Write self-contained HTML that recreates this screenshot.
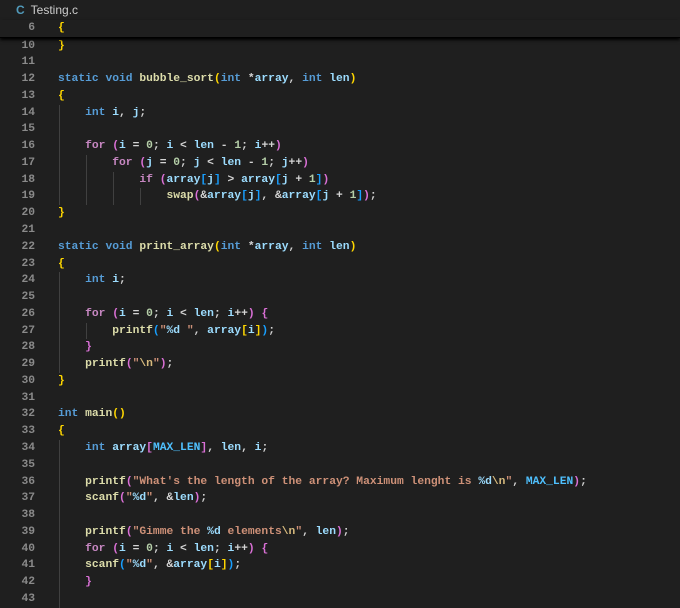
<!DOCTYPE html>
<html><head><meta charset="utf-8"><style>
body{margin:0;width:680px;height:605px;background:#1f1f1f;overflow:hidden;font-family:"Liberation Mono",monospace;font-size:11.3px;font-weight:bold;color:#d4d4d4;position:relative}
.tab{position:absolute;left:16px;top:3px;font-family:"Liberation Sans",sans-serif;font-weight:normal;font-size:12px;color:#cccccc}
.tab b{color:#519aba;margin-right:6px;font-weight:bold}
.sticky{position:absolute;left:0;top:20px;width:680px;height:16.8px;line-height:16.8px;background:#1f1f1f;box-shadow:0 2px 3px #000;z-index:2;border-bottom:1px solid #000}
.code{position:absolute;left:0;top:37.6px}
.l{height:16.78px;line-height:16.78px;white-space:pre;position:relative}
.ln{position:absolute;left:0;width:35px;text-align:right;color:#8a8a8a}
.t{position:absolute;left:58px}
.g{position:absolute;top:0;width:1px;height:16.78px;background:#404040}
.k{color:#569cd6}.c{color:#c586c0}.f{color:#dcdcaa}.v{color:#9cdcfe}.s{color:#ce9178}.n{color:#b5cea8}.y{color:#ffd700}.p{color:#da70d6}.b{color:#179fff}.m{color:#4fc1ff}.e{color:#d7ba7d}
</style></head><body>
<div class="tab"><b>C</b>Testing.c</div>
<div class="sticky"><div class="l" style="height:16.8px"><span class="ln">6</span><span class="t"><span class="y">{</span></span></div></div>
<div class="code">
<div class="l"><span class="ln">10</span><span class="t"><span class="y">}</span></span></div>
<div class="l"><span class="ln">11</span></div>
<div class="l"><span class="ln">12</span><span class="t"><span class="k">static void</span> <span class="f">bubble_sort</span><span class="y">(</span><span class="k">int</span> *<span class="v">array</span>, <span class="k">int</span> <span class="v">len</span><span class="y">)</span></span></div>
<div class="l"><span class="ln">13</span><span class="t"><span class="y">{</span></span></div>
<div class="l"><span class="ln">14</span><i class="g" style="left:59px"></i><span class="t">    <span class="k">int</span> <span class="v">i</span>, <span class="v">j</span>;</span></div>
<div class="l"><span class="ln">15</span><i class="g" style="left:59px"></i></div>
<div class="l"><span class="ln">16</span><i class="g" style="left:59px"></i><span class="t">    <span class="c">for</span> <span class="p">(</span><span class="v">i</span> = <span class="n">0</span>; <span class="v">i</span> &lt; <span class="v">len</span> - <span class="n">1</span>; <span class="v">i</span>++<span class="p">)</span></span></div>
<div class="l"><span class="ln">17</span><i class="g" style="left:59px"></i><i class="g" style="left:86px"></i><span class="t">        <span class="c">for</span> <span class="p">(</span><span class="v">j</span> = <span class="n">0</span>; <span class="v">j</span> &lt; <span class="v">len</span> - <span class="n">1</span>; <span class="v">j</span>++<span class="p">)</span></span></div>
<div class="l"><span class="ln">18</span><i class="g" style="left:59px"></i><i class="g" style="left:86px"></i><i class="g" style="left:113px"></i><span class="t">            <span class="c">if</span> <span class="p">(</span><span class="v">array</span><span class="b">[</span><span class="v">j</span><span class="b">]</span> &gt; <span class="v">array</span><span class="b">[</span><span class="v">j</span> + <span class="n">1</span><span class="b">]</span><span class="p">)</span></span></div>
<div class="l"><span class="ln">19</span><i class="g" style="left:59px"></i><i class="g" style="left:86px"></i><i class="g" style="left:113px"></i><i class="g" style="left:140px"></i><span class="t">                <span class="f">swap</span><span class="p">(</span>&amp;<span class="v">array</span><span class="b">[</span><span class="v">j</span><span class="b">]</span>, &amp;<span class="v">array</span><span class="b">[</span><span class="v">j</span> + <span class="n">1</span><span class="b">]</span><span class="p">)</span>;</span></div>
<div class="l"><span class="ln">20</span><span class="t"><span class="y">}</span></span></div>
<div class="l"><span class="ln">21</span></div>
<div class="l"><span class="ln">22</span><span class="t"><span class="k">static void</span> <span class="f">print_array</span><span class="y">(</span><span class="k">int</span> *<span class="v">array</span>, <span class="k">int</span> <span class="v">len</span><span class="y">)</span></span></div>
<div class="l"><span class="ln">23</span><span class="t"><span class="y">{</span></span></div>
<div class="l"><span class="ln">24</span><i class="g" style="left:59px"></i><span class="t">    <span class="k">int</span> <span class="v">i</span>;</span></div>
<div class="l"><span class="ln">25</span><i class="g" style="left:59px"></i></div>
<div class="l"><span class="ln">26</span><i class="g" style="left:59px"></i><span class="t">    <span class="c">for</span> <span class="p">(</span><span class="v">i</span> = <span class="n">0</span>; <span class="v">i</span> &lt; <span class="v">len</span>; <span class="v">i</span>++<span class="p">)</span> <span class="p">{</span></span></div>
<div class="l"><span class="ln">27</span><i class="g" style="left:59px"></i><i class="g" style="left:86px"></i><span class="t">        <span class="f">printf</span><span class="b">(</span><span class="s">"</span><span class="v">%d</span><span class="s"> "</span>, <span class="v">array</span><span class="y">[</span><span class="v">i</span><span class="y">]</span><span class="b">)</span>;</span></div>
<div class="l"><span class="ln">28</span><i class="g" style="left:59px"></i><span class="t">    <span class="p">}</span></span></div>
<div class="l"><span class="ln">29</span><i class="g" style="left:59px"></i><span class="t">    <span class="f">printf</span><span class="p">(</span><span class="s">"</span><span class="e">\n</span><span class="s">"</span><span class="p">)</span>;</span></div>
<div class="l"><span class="ln">30</span><span class="t"><span class="y">}</span></span></div>
<div class="l"><span class="ln">31</span></div>
<div class="l"><span class="ln">32</span><span class="t"><span class="k">int</span> <span class="f">main</span><span class="y">()</span></span></div>
<div class="l"><span class="ln">33</span><span class="t"><span class="y">{</span></span></div>
<div class="l"><span class="ln">34</span><i class="g" style="left:59px"></i><span class="t">    <span class="k">int</span> <span class="v">array</span><span class="p">[</span><span class="m">MAX_LEN</span><span class="p">]</span>, <span class="v">len</span>, <span class="v">i</span>;</span></div>
<div class="l"><span class="ln">35</span><i class="g" style="left:59px"></i></div>
<div class="l"><span class="ln">36</span><i class="g" style="left:59px"></i><span class="t">    <span class="f">printf</span><span class="p">(</span><span class="s">"What's the length of the array? Maximum lenght is </span><span class="v">%d</span><span class="e">\n</span><span class="s">"</span>, <span class="m">MAX_LEN</span><span class="p">)</span>;</span></div>
<div class="l"><span class="ln">37</span><i class="g" style="left:59px"></i><span class="t">    <span class="f">scanf</span><span class="p">(</span><span class="s">"</span><span class="v">%d</span><span class="s">"</span>, &amp;<span class="v">len</span><span class="p">)</span>;</span></div>
<div class="l"><span class="ln">38</span><i class="g" style="left:59px"></i></div>
<div class="l"><span class="ln">39</span><i class="g" style="left:59px"></i><span class="t">    <span class="f">printf</span><span class="p">(</span><span class="s">"Gimme the </span><span class="v">%d</span><span class="s"> elements</span><span class="e">\n</span><span class="s">"</span>, <span class="v">len</span><span class="p">)</span>;</span></div>
<div class="l"><span class="ln">40</span><i class="g" style="left:59px"></i><span class="t">    <span class="c">for</span> <span class="p">(</span><span class="v">i</span> = <span class="n">0</span>; <span class="v">i</span> &lt; <span class="v">len</span>; <span class="v">i</span>++<span class="p">)</span> <span class="p">{</span></span></div>
<div class="l"><span class="ln">41</span><i class="g" style="left:59px"></i><span class="t">    <span class="f">scanf</span><span class="b">(</span><span class="s">"</span><span class="v">%d</span><span class="s">"</span>, &amp;<span class="v">array</span><span class="y">[</span><span class="v">i</span><span class="y">]</span><span class="b">)</span>;</span></div>
<div class="l"><span class="ln">42</span><i class="g" style="left:59px"></i><span class="t">    <span class="p">}</span></span></div>
<div class="l"><span class="ln">43</span><i class="g" style="left:59px"></i></div>
</div>
</body></html>
